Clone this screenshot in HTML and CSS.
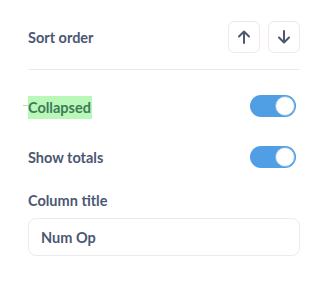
FILE: index.html
```html
<!DOCTYPE html>
<html>
<head>
<meta charset="utf-8">
<link rel="stylesheet" href="styles.css">
</head>
<body>
<div class="panel">
  <div class="sort-row">
    <span class="label">Sort order</span>
    <div class="btns">
      <button class="icon-btn" type="button">
        <svg width="16" height="16" viewBox="0 0 16 16"><path d="M8 14V2.5M3 7.5L8 2.5L13 7.5" fill="none" stroke="#4c5773" stroke-width="2" stroke-linecap="round" stroke-linejoin="round"/></svg>
      </button>
      <button class="icon-btn" type="button">
        <svg width="16" height="16" viewBox="0 0 16 16"><path d="M8 2V13.5M3 8.5L8 13.5L13 8.5" fill="none" stroke="#4c5773" stroke-width="2" stroke-linecap="round" stroke-linejoin="round"/></svg>
      </button>
    </div>
  </div>
  <div class="toggle-row first">
    <span class="label hl">Collapsed</span>
    <span class="toggle"><span class="knob"></span></span>
  </div>
  <div class="toggle-row">
    <span class="label">Show totals</span>
    <span class="toggle"><span class="knob"></span></span>
  </div>
  <div class="field">
    <div class="label">Column title</div>
    <div class="input">Num Op</div>
  </div>
</div>
</body>
</html>
```
FILE: styles.css
```css
html, body {
  margin: 0;
  padding: 0;
  background: #fff;
}
body {
  font-family: Lato, "Open Sans", sans-serif;
  color: #4c5773;
  font-weight: 700;
  font-size: 14px;
}
.panel {
  padding: 21px 31px 0 28px;
}
.label {
  font-size: 14.5px;
  font-weight: 700;
  line-height: 17px;
}
.sort-row {
  display: flex;
  align-items: center;
  justify-content: space-between;
  height: 32px;
  padding-bottom: 16px;
  border-bottom: 1px solid #ebebee;
}
.btns {
  display: flex;
  gap: 8px;
}
.icon-btn {
  width: 32px;
  height: 32px;
  box-sizing: border-box;
  border: 1px solid #f0e8ea;
  border-radius: 6px;
  background: #fff;
  padding: 0;
  display: flex;
  align-items: center;
  justify-content: center;
}
.toggle-row {
  display: flex;
  align-items: center;
  justify-content: space-between;
  height: 22px;
  margin-top: 29px;
  padding-right: 4px;
}
.toggle-row.first {
  margin-top: 25px;
}
.toggle {
  width: 46px;
  height: 22px;
  border-radius: 11px;
  background: #509ee3;
  display: flex;
  align-items: center;
  justify-content: flex-end;
  box-sizing: border-box;
  padding-right: 1px;
}
.knob {
  width: 20px;
  height: 20px;
  border-radius: 50%;
  background: #fff;
  box-sizing: border-box;
  border: 1px solid #7fb6ea;
}
.hl {
  position: relative;
  display: inline-block;
  padding: 3px 1px 3px 0;
  margin-top: 2px;
  background: #b9f8b9;
  color: #3d7b57;
}
.hl::before {
  content: "";
  position: absolute;
  left: -5px;
  top: 9px;
  width: 5px;
  height: 1px;
  background: #a8eaa8;
}
.field {
  margin-top: 24px;
}
.input {
  margin-top: 9px;
  height: 38px;
  box-sizing: border-box;
  border: 1px solid #ebebee;
  border-radius: 8px;
  padding: 0 12px;
  display: flex;
  align-items: center;
  font-size: 14.5px;
}
```
